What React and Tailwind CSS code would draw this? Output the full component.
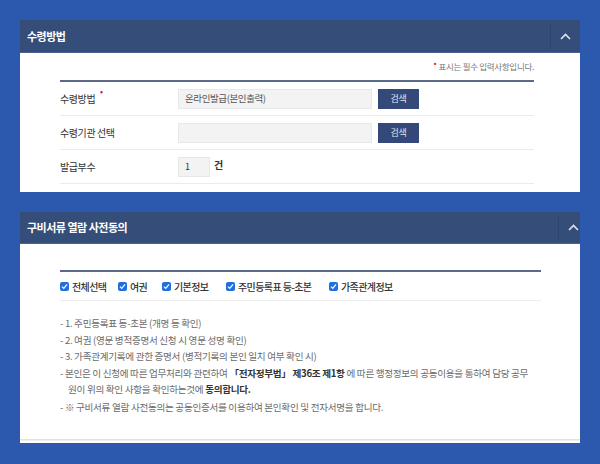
import React from "react";

const F = { fontFamily: '"Noto Sans CJK KR", "Noto Sans", sans-serif' };

function Chevron() {
  return (
    <svg width="11" height="7" viewBox="0 0 11 7" fill="none">
      <path d="M1 6 L5.5 1.5 L10 6" stroke="#dfe4ee" strokeWidth="1.6" />
    </svg>
  );
}

function Check({ label }) {
  return (
    <label className="flex items-center gap-[3px]">
      <span className="flex h-[9px] w-[9px] items-center justify-center rounded-[2px] bg-[#1f6fe0]">
        <svg width="7" height="7" viewBox="0 0 7 7" fill="none">
          <path d="M1 3.6 L2.8 5.4 L6 1.4" stroke="#fff" strokeWidth="1.3" />
        </svg>
      </span>
      <span className="text-[10px] font-medium tracking-[-0.6px] text-[#333]">{label}</span>
    </label>
  );
}

function Row({ label, req, children }) {
  return (
    <div className="flex h-[34px] items-center border-b border-[#ebebeb]">
      <div className="relative w-[118px] text-[10px] tracking-[-0.4px] text-[#333]">
        {label}
        {req && <span className="absolute left-[40px] top-[-6px] text-[9px] text-[#e0141e]">•</span>}
      </div>
      {children}
    </div>
  );
}

export default function App() {
  return (
    <div style={F} className="h-[464px] w-[600px] overflow-hidden bg-[#2c59ad] px-[20px] pt-[20px]">
      {/* Panel 1 */}
      <div className="w-[560px] bg-white">
        <div className="flex h-[33px] items-center border-b border-[#4a6290] bg-[#344d79]">
          <div className="flex-1 pl-[7px] text-[11px] font-bold tracking-[-0.5px] text-white">수령방법</div>
          <div className="flex h-[25px] w-[30px] items-center justify-center border-l border-[#2d446e]">
            <Chevron />
          </div>
        </div>
        <div className="pl-[40px] pr-[46px] pb-[8px]">
          <div className="flex h-[27px] items-center justify-end">
            <span className="relative top-[-4px] mr-[2px] text-[8px] text-[#e0141e]">•</span>
            <span className="text-[8.5px] tracking-[-0.3px] text-[#777]">표시는 필수 입력사항입니다.</span>
          </div>
          <div className="border-t-2 border-[#5b6a8b]">
            <Row label="수령방법" req>
              <div className="flex h-[20px] w-[194px] items-center border border-[#e8e8e8] bg-[#f3f3f3] pl-[6px] text-[9.5px] tracking-[-0.4px] text-[#555]">
                온라인발급(본인출력)
              </div>
              <button className="ml-[6px] h-[20px] w-[41px] bg-[#34497a] text-[9px] tracking-[-0.3px] text-[#dfe3ec]">검색</button>
            </Row>
            <Row label="수령기관 선택">
              <div className="h-[20px] w-[194px] border border-[#e8e8e8] bg-[#f3f3f3]" />
              <button className="ml-[6px] h-[20px] w-[41px] bg-[#34497a] text-[9px] tracking-[-0.3px] text-[#dfe3ec]">검색</button>
            </Row>
            <Row label="발급부수">
              <div className="flex h-[20px] w-[32px] items-center border border-[#e8e8e8] bg-[#f3f3f3] pl-[6px] text-[9px] text-[#333]">1</div>
              <span className="ml-[4px] mt-[-4px] text-[10px] font-bold text-[#333]">건</span>
            </Row>
          </div>
        </div>
      </div>

      {/* Panel 2 */}
      <div className="mt-[20px] w-[560px] overflow-hidden bg-white">
        <div className="flex h-[32px] w-[568px] items-center border-b border-[#4a6290] bg-[#344d79]">
          <div className="flex-1 pl-[7px] text-[11px] font-bold tracking-[-0.5px] text-white">구비서류 열람 사전동의</div>
          <div className="flex h-[25px] w-[30px] items-center justify-center border-l border-[#2d446e]">
            <Chevron />
          </div>
        </div>
        <div className="pl-[40px] pr-[39px] pt-[26px]">
          <div className="border-t-2 border-[#5b6a8b]">
            <div className="flex h-[29px] items-center border-b border-[#ececec]">
              <div className="w-[58px]"><Check label="전체선택" /></div>
              <div className="w-[44px]"><Check label="여권" /></div>
              <div className="w-[64px]"><Check label="기본정보" /></div>
              <div className="w-[103px]"><Check label="주민등록표 등-초본" /></div>
              <Check label="가족관계정보" />
            </div>
          </div>
          <ul className="pt-[14px] pb-[24px] text-[9.6px] tracking-[-0.3px] text-[#6a6a6a]">
            <li className="leading-[16.5px]">- 1. 주민등록표 등-초본 (개명 등 확인)</li>
            <li className="leading-[16.5px]">- 2. 여권 (영문 병적증명서 신청 시 영문 성명 확인)</li>
            <li className="leading-[16.5px]">- 3. 가족관계기록에 관한 증명서 (병적기록의 본인 일치 여부 확인 시)</li>
            <li className="break-all pl-[8px] -indent-[8px] pr-[10px] leading-[16px]">
              - 본인은 이 신청에 따른 업무처리와 관련하여 <b className="font-bold text-[#333]">「전자정부법」 제36조 제1항</b> 에 따른 행정정보의 공동이용을 통하여 담당 공무원이 위의 확인 사항을 확인하는것에 <b className="font-bold text-[#333]">동의합니다.</b>
            </li>
            <li className="mt-[2px] leading-[16.5px]">- ※ 구비서류 열람 사전동의는 공동인증서를 이용하여 본인확인 및 전자서명을 합니다.</li>
          </ul>
        </div>
        <div className="h-[1px] bg-[#e2e2e2]" />
        <div className="h-[1px] bg-[#f0f0f0]" />
        <div className="h-[2px] bg-white" />
      </div>
    </div>
  );
}
